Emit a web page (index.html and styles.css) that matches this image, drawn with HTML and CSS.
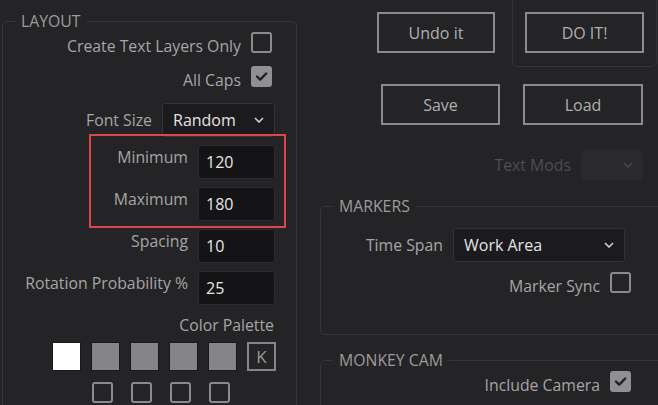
FILE: index.html
```html
<!DOCTYPE html>
<html lang="en">
<head>
<meta charset="utf-8">
<title>Type Monkey</title>
<link rel="stylesheet" href="styles.css">
</head>
<body>
<div class="panel">
  <fieldset class="group layout">
    <legend>LAYOUT</legend>
    <div class="row check-row first">
      <span class="label">Create Text Layers Only</span>
      <span class="check"></span>
    </div>
    <div class="row check-row second">
      <span class="label">All Caps</span>
      <span class="check on"><svg viewBox="0 0 21 21" width="21" height="21"><path d="M6 10.5l3.2 3.2L15.2 7.5" fill="none" stroke="#222124" stroke-width="2.4" stroke-linecap="round" stroke-linejoin="round"/></svg></span>
    </div>
    <div class="row select-row">
      <span class="label">Font Size</span>
      <div class="select size">
        <span class="value">Random</span>
        <svg class="chev" viewBox="0 0 10 6" width="10" height="6"><path d="M1 1l4 4 4-4" fill="none" stroke="#d8d8d8" stroke-width="1.5"/></svg>
      </div>
    </div>
    <div class="highlight">
      <div class="row field">
        <span class="label">Minimum</span>
        <div class="input">120</div>
      </div>
      <div class="row field">
        <span class="label">Maximum</span>
        <div class="input">180</div>
      </div>
    </div>
    <div class="row field">
      <span class="label">Spacing</span>
      <div class="input">10</div>
    </div>
    <div class="row field">
      <span class="label">Rotation Probability %</span>
      <div class="input">25</div>
    </div>
    <div class="row palette-title">
      <span class="label">Color Palette</span>
    </div>
    <div class="swatches">
      <span class="swatch white"></span>
      <span class="swatch"></span>
      <span class="swatch"></span>
      <span class="swatch"></span>
      <span class="swatch"></span>
      <span class="swatch key">K</span>
      <span class="check c2"></span>
      <span class="check c3"></span>
      <span class="check c4"></span>
      <span class="check c5"></span>
    </div>
  </fieldset>

  <div class="side">
    <div class="top-row">
      <button class="btn undo">Undo it</button>
      <div class="run-box">
        <button class="btn run">DO IT!</button>
      </div>
    </div>
    <div class="preset-row">
      <button class="btn save">Save</button>
      <button class="btn load">Load</button>
    </div>
    <div class="mods-row">
      <span class="label dim">Text Mods</span>
      <div class="select disabled">
        <svg class="chev" viewBox="0 0 10 6" width="10" height="6"><path d="M1 1l4 4 4-4" fill="none" stroke="#4c4b4e" stroke-width="1.5"/></svg>
      </div>
    </div>

    <fieldset class="group markers">
      <legend>MARKERS</legend>
      <div class="inner">
        <div class="row select-row">
          <span class="label">Time Span</span>
          <div class="select span">
            <span class="value">Work Area</span>
            <svg class="chev" viewBox="0 0 10 6" width="10" height="6"><path d="M1 1l4 4 4-4" fill="none" stroke="#d8d8d8" stroke-width="1.5"/></svg>
          </div>
        </div>
        <div class="row check-row sync">
          <span class="label">Marker Sync</span>
          <span class="check"></span>
        </div>
      </div>
    </fieldset>

    <fieldset class="group cam">
      <legend>MONKEY CAM</legend>
      <div class="inner">
        <div class="row check-row">
          <span class="label">Include Camera</span>
          <span class="check on"><svg viewBox="0 0 21 21" width="21" height="21"><path d="M6 10.5l3.2 3.2L15.2 7.5" fill="none" stroke="#222124" stroke-width="2.4" stroke-linecap="round" stroke-linejoin="round"/></svg></span>
        </div>
      </div>
    </fieldset>
  </div>
</div>
</body>
</html>
```

FILE: styles.css
```css
* {
  box-sizing: border-box;
}

html, body {
  margin: 0;
  height: 100%;
}

body {
  background: #242325;
  color: #a6a6a6;
  font-family: "Open Sans", "Liberation Sans", sans-serif;
  font-size: 15.8px;
  overflow: hidden;
}

.panel {
  display: flex;
  align-items: flex-start;
  width: 658px;
  height: 405px;
  overflow: hidden;
}

/* group boxes */
.group {
  margin: 0;
  padding: 0;
  border: 1px solid #363538;
  border-radius: 5px;
  min-inline-size: 0;
}

.group legend {
  margin-left: 12px;
  padding: 0 6px;
  font-size: 15.8px;
  line-height: 18px;
  color: #9c9c9c;
}

.layout {
  margin: 12px 0 0 2px;
  width: 295px;
  height: 420px;
  padding: 2px 21px 0 0;
  display: flex;
  flex-direction: column;
}

.row {
  display: flex;
  justify-content: flex-end;
  gap: 10px;
}

.label {
  line-height: 20px;
  white-space: nowrap;
}

.label.dim {
  color: #4f4e51;
}

.check-row {
  align-items: flex-start;
  height: 21px;
}

.check-row .label {
  margin-top: 4px;
}

.check-row .check {
  margin-right: 3px;
}

.layout .second {
  margin-top: 13px;
}

.select-row {
  align-items: center;
}

.layout .select-row {
  margin-top: 16px;
}

/* checkboxes */
.check {
  width: 21px;
  height: 21px;
  border: 2px solid #8b8a8d;
  border-radius: 3px;
  flex: none;
  display: block;
}

.check.on {
  border: none;
  background: #918f93;
}

.check svg {
  display: block;
}

/* dropdowns */
.select {
  position: relative;
  height: 34px;
  background: #1b1a1c;
  border: 1px solid #333235;
  border-radius: 3px;
  display: flex;
  align-items: center;
  padding-left: 10px;
}

.select .value {
  color: #e4e4e4;
  font-size: 16px;
}

.select .chev {
  position: absolute;
  right: 10px;
  top: 50%;
  margin-top: -3px;
}

.select.size {
  width: 113px;
}

.select.span {
  width: 172px;
  margin-right: 6px;
}

.select.disabled {
  width: 62px;
  height: 30px;
  background: #2a292c;
  border-color: #2a292c;
}

.select.disabled .chev {
  right: 9px;
}

/* number inputs */
.field {
  align-items: flex-start;
  margin-top: 8px;
  height: 34px;
}

.field .label {
  margin-top: 2px;
}

.input {
  width: 77px;
  height: 34px;
  background: #141315;
  border: 1px solid #2c2b2e;
  border-radius: 3px;
  color: #e6e6e6;
  font-size: 16px;
  line-height: 32px;
  padding-left: 7px;
}

.highlight {
  position: relative;
}

.highlight::after {
  content: "";
  position: absolute;
  top: -3px;
  bottom: -7px;
  right: -11px;
  width: 193px;
  border: 2px solid #d8484a;
  pointer-events: none;
}

.highlight + .field {
  margin-top: 8px;
}

.palette-title {
  margin-top: 10px;
  margin-right: 1px;
}

/* colour palette */
.swatches {
  margin-top: 7px;
  margin-right: -1px;
  align-self: flex-end;
  display: grid;
  grid-template-columns: repeat(6, 29px);
  column-gap: 10px;
  row-gap: 11px;
}

.swatch {
  width: 29px;
  height: 29px;
  background: #858487;
  border: 1px solid #19181a;
}

.swatch.white {
  background: #ffffff;
}

.swatch.key {
  background: transparent;
  border: 2px solid #858487;
  color: #9a9a9a;
  font-size: 17px;
  line-height: 25px;
  text-align: center;
}

.swatches .check {
  margin-left: 1px;
}

.c2 { grid-column: 2; }
.c3 { grid-column: 3; }
.c4 { grid-column: 4; }
.c5 { grid-column: 5; }

/* right-hand column */
.side {
  width: 338px;
  margin-left: 23px;
  display: flex;
  flex-direction: column;
  flex: none;
}

.btn {
  height: 41px;
  background: transparent;
  border: 2px solid #8b8a8d;
  border-radius: 0;
  color: #b0b0b0;
  font-family: inherit;
  font-size: 16px;
  font-weight: 400;
  padding: 0;
}

.top-row {
  display: flex;
  align-items: flex-start;
}

.undo {
  width: 118px;
  margin: 12px 0 0 57px;
}

.run-box {
  margin: -10px 0 0 17px;
  padding: 21px 12px 13px 12px;
  border: 1px solid #333235;
  border-radius: 0 0 5px 5px;
}

.run {
  width: 119px;
  display: block;
}

.preset-row {
  display: flex;
  margin-top: 17px;
}

.save {
  width: 119px;
  margin-left: 61px;
}

.load {
  width: 120px;
  margin-left: 23px;
}

.mods-row {
  display: flex;
  justify-content: flex-end;
  align-items: center;
  gap: 10px;
  margin-top: 25px;
  margin-right: 15px;
}

.markers,
.cam {
  width: 380px;
}

.markers {
  margin-top: 17px;
  padding: 13px 0 41px 0;
}

.cam {
  margin-top: 16px;
  padding: 2px 0 40px 0;
}

.inner {
  width: 310px;
  display: flex;
  flex-direction: column;
}

.inner .check-row .check {
  margin-right: 0;
}

.sync {
  margin-top: 10px;
}
```
